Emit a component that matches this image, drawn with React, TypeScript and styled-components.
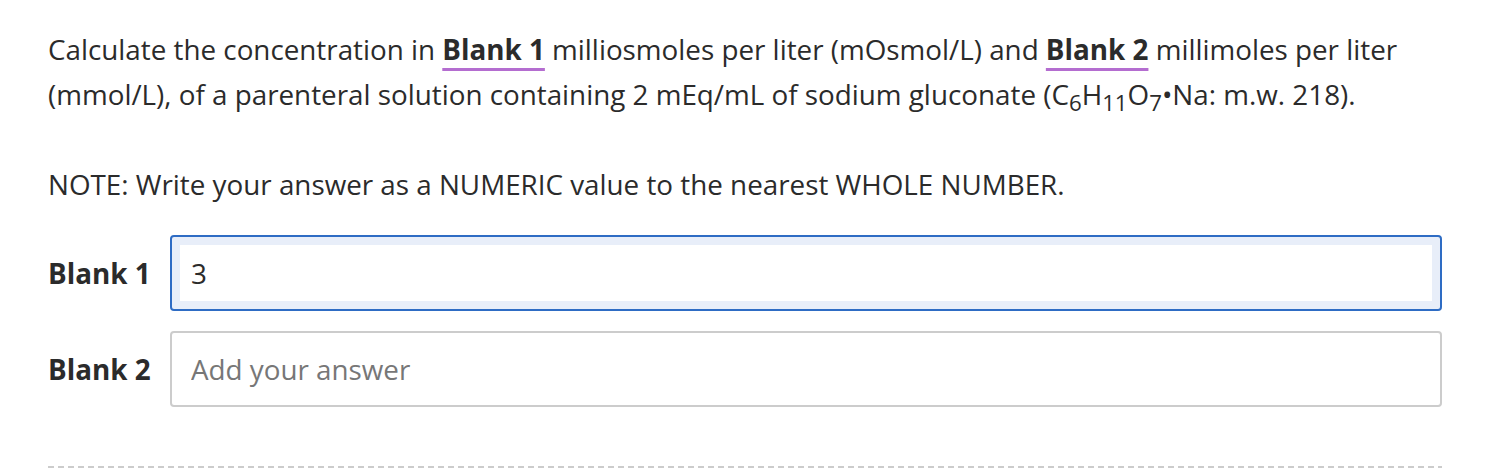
import styled, { createGlobalStyle } from 'styled-components';

const GlobalStyle = createGlobalStyle`
  html, body {
    margin: 0;
    padding: 0;
    background: #ffffff;
  }
  body {
    font-family: "Open Sans", "Liberation Sans", sans-serif;
    color: #2d3b45;
  }
`;

const Page = styled.div`
  padding: 27px 48px 0 48px;
`;

const Stem = styled.div`
  font-size: 27.8px;
  line-height: 45px;
  color: #2b2b2b;
`;

const Para = styled.p`
  margin: 0 0 45px 0;
`;

const BlankRef = styled.strong`
  font-weight: 700;
  text-decoration: underline;
  text-decoration-color: #b46dd0;
  text-decoration-thickness: 3px;
  text-underline-offset: 8px;
`;

const Sub = styled.sub`
  font-size: 0.8em;
  line-height: 0;
  vertical-align: -0.26em;
`;

const Answers = styled.div`
  display: flex;
  flex-direction: column;
  gap: 20px;
  margin-top: -17px;
`;

const Row = styled.div`
  display: flex;
  align-items: center;
`;

const Label = styled.label`
  width: 122px;
  flex: none;
  font-size: 27.8px;
  font-weight: 700;
  color: #2b2b2b;
`;

const Input = styled.input<{ $focused?: boolean }>`
  flex: 1;
  height: 76px;
  box-sizing: border-box;
  padding: 0 19px;
  font-family: "Open Sans", "Liberation Sans", sans-serif;
  font-size: 27.8px;
  color: #2b2b2b;
  border-radius: 4px;
  border: 2px solid ${(p) => (p.$focused ? '#2e6cc4' : '#cccccc')};
  box-shadow: ${(p) => (p.$focused ? 'inset 0 0 0 8px #e8eef9' : 'none')};
  outline: none;
  background: #ffffff;

  &::placeholder {
    color: #777777;
  }
`;

const Divider = styled.div`
  margin-top: 59px;
  height: 2px;
  background-image: linear-gradient(to right, #cccccc 6px, transparent 6px);
  background-size: 10px 2px;
  background-repeat: repeat-x;
`;

export default function App() {
  return (
    <>
      <GlobalStyle />
      <Page>
        <Stem>
          <Para>
            Calculate the concentration in <BlankRef>Blank 1</BlankRef> milliosmoles per liter
            (mOsmol/L) and <BlankRef>Blank 2</BlankRef> millimoles per liter (mmol/L), of a
            parenteral solution containing 2 mEq/mL of sodium gluconate (C<Sub>6</Sub>H
            <Sub>11</Sub>O<Sub>7</Sub>•Na: m.w. 218).
          </Para>
          <Para>NOTE: Write your answer as a NUMERIC value to the nearest WHOLE NUMBER.</Para>
        </Stem>
        <Answers>
          <Row>
            <Label>Blank 1</Label>
            <Input $focused defaultValue="3" />
          </Row>
          <Row>
            <Label>Blank 2</Label>
            <Input placeholder="Add your answer" />
          </Row>
        </Answers>
        <Divider />
      </Page>
    </>
  );
}
